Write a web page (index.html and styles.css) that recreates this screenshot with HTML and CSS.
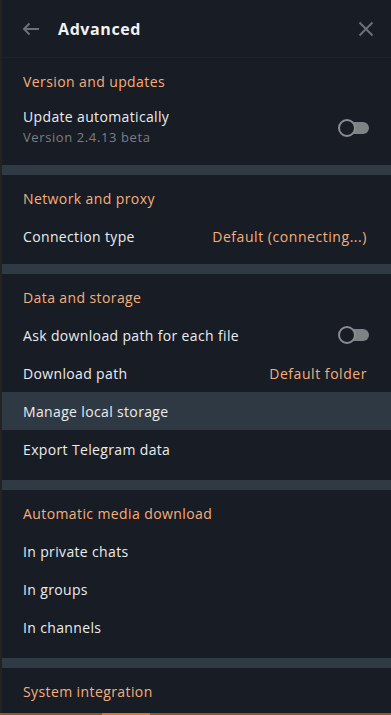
FILE: index.html
```html
<!DOCTYPE html>
<html>
<head>
<meta charset="utf-8">
<link rel="stylesheet" href="styles.css">
</head>
<body>
<div class="frame">
  <div class="edge"></div>
  <div class="panel">
    <header class="header">
      <svg class="back" width="18" height="14" viewBox="0 0 18 14"><path d="M17 7H2M7.5 1.5L2 7l5.5 5.5" fill="none" stroke="#6c7076" stroke-width="2"/></svg>
      <div class="title">Advanced</div>
      <svg class="close" width="16" height="16" viewBox="0 0 16 16"><path d="M1.5 1.5l13 13M14.5 1.5l-13 13" fill="none" stroke="#6c7076" stroke-width="2"/></svg>
    </header>

    <section class="section compact">
      <div class="heading">Version and updates</div>
      <div class="row tall">
        <div class="texts">
          <div class="label">Update automatically</div>
          <div class="sub">Version 2.4.13 beta</div>
        </div>
        <div class="toggle"><span class="knob"></span></div>
      </div>
    </section>
    <div class="sep"></div>

    <section class="section compact">
      <div class="heading">Network and proxy</div>
      <div class="row">
        <div class="label">Connection type</div>
        <div class="value">Default (connecting...)</div>
      </div>
    </section>
    <div class="sep"></div>

    <section class="section">
      <div class="heading">Data and storage</div>
      <div class="row">
        <div class="label">Ask download path for each file</div>
        <div class="toggle"><span class="knob"></span></div>
      </div>
      <div class="row">
        <div class="label">Download path</div>
        <div class="value">Default folder</div>
      </div>
      <div class="row hover">
        <div class="label">Manage local storage</div>
      </div>
      <div class="row">
        <div class="label">Export Telegram data</div>
      </div>
    </section>
    <div class="sep"></div>

    <section class="section">
      <div class="heading">Automatic media download</div>
      <div class="row"><div class="label">In private chats</div></div>
      <div class="row"><div class="label">In groups</div></div>
      <div class="row"><div class="label">In channels</div></div>
    </section>
    <div class="sep"></div>

    <section class="section">
      <div class="heading">System integration</div>
    </section>
  </div>
</div>
<div class="bottombar"><span class="seg"></span></div>
</body>
</html>
```

FILE: styles.css
```css
html, body {
  margin: 0;
  padding: 0;
}
body {
  width: 391px;
  height: 715px;
  overflow: hidden;
  background: #181c25;
  font-family: "Open Sans", "Noto Sans", sans-serif;
  color: #e8e9eb;
  display: flex;
  flex-direction: column;
}
.frame {
  flex: 1;
  display: flex;
  min-height: 0;
  overflow: hidden;
}
.edge {
  width: 2px;
  background: #232323;
  flex-shrink: 0;
}
.panel {
  flex: 1;
  background: #181c25;
  display: flex;
  flex-direction: column;
}
.header {
  height: 57px;
  flex-shrink: 0;
  border-bottom: 1px solid #1c212a;
  display: flex;
  align-items: center;
  padding: 0 17px 0 20px;
}
.back {
  margin-top: 1px;
}
.title {
  margin-left: 18px;
  font-size: 16px;
  font-weight: 700;
  color: #f2f2f2;
  flex: 1;
  letter-spacing: 0.6px;
}
.close {
  margin-top: 1px;
}
.section {
  flex-shrink: 0;
  padding: 8px 0 12px;
}
.section.compact {
  padding-bottom: 9px;
}
.heading {
  height: 32px;
  line-height: 32px;
  margin-bottom: 2px;
  padding-left: 21px;
  font-size: 14px;
  letter-spacing: 0.4px;
  color: #f7ae7a;
}
.row {
  height: 38px;
  display: flex;
  align-items: center;
  justify-content: space-between;
  padding: 0 22px 0 21px;
  font-size: 14px;
  letter-spacing: 0.35px;
}
.row.tall {
  height: 56px;
}
.row.hover {
  background: #2f3943;
}
.texts {
  display: flex;
  flex-direction: column;
}
.texts .label {
  line-height: 20px;
  margin-top: -3px;
}
.sub {
  font-size: 13px;
  line-height: 20px;
  letter-spacing: 0.6px;
  color: #7b7f84;
}
.label {
  color: #ebecee;
}
.value {
  color: #f7ae7a;
  margin-right: 2px;
  letter-spacing: 0.55px;
}
.toggle {
  position: relative;
  width: 30px;
  height: 12px;
  border-radius: 6px;
  background: #7f8185;
}
.toggle .knob {
  position: absolute;
  left: -1px;
  top: -3px;
  width: 14px;
  height: 14px;
  border-radius: 50%;
  border: 2px solid #8a8c90;
  background: #181c25;
}
.sep {
  height: 10px;
  background: #303a44;
  flex-shrink: 0;
}
.bottombar {
  height: 2px;
  background: #8a5a2c;
  flex-shrink: 0;
  display: flex;
}
.bottombar .seg {
  margin-left: 102px;
  width: 48px;
  background: #d9782a;
}
```
